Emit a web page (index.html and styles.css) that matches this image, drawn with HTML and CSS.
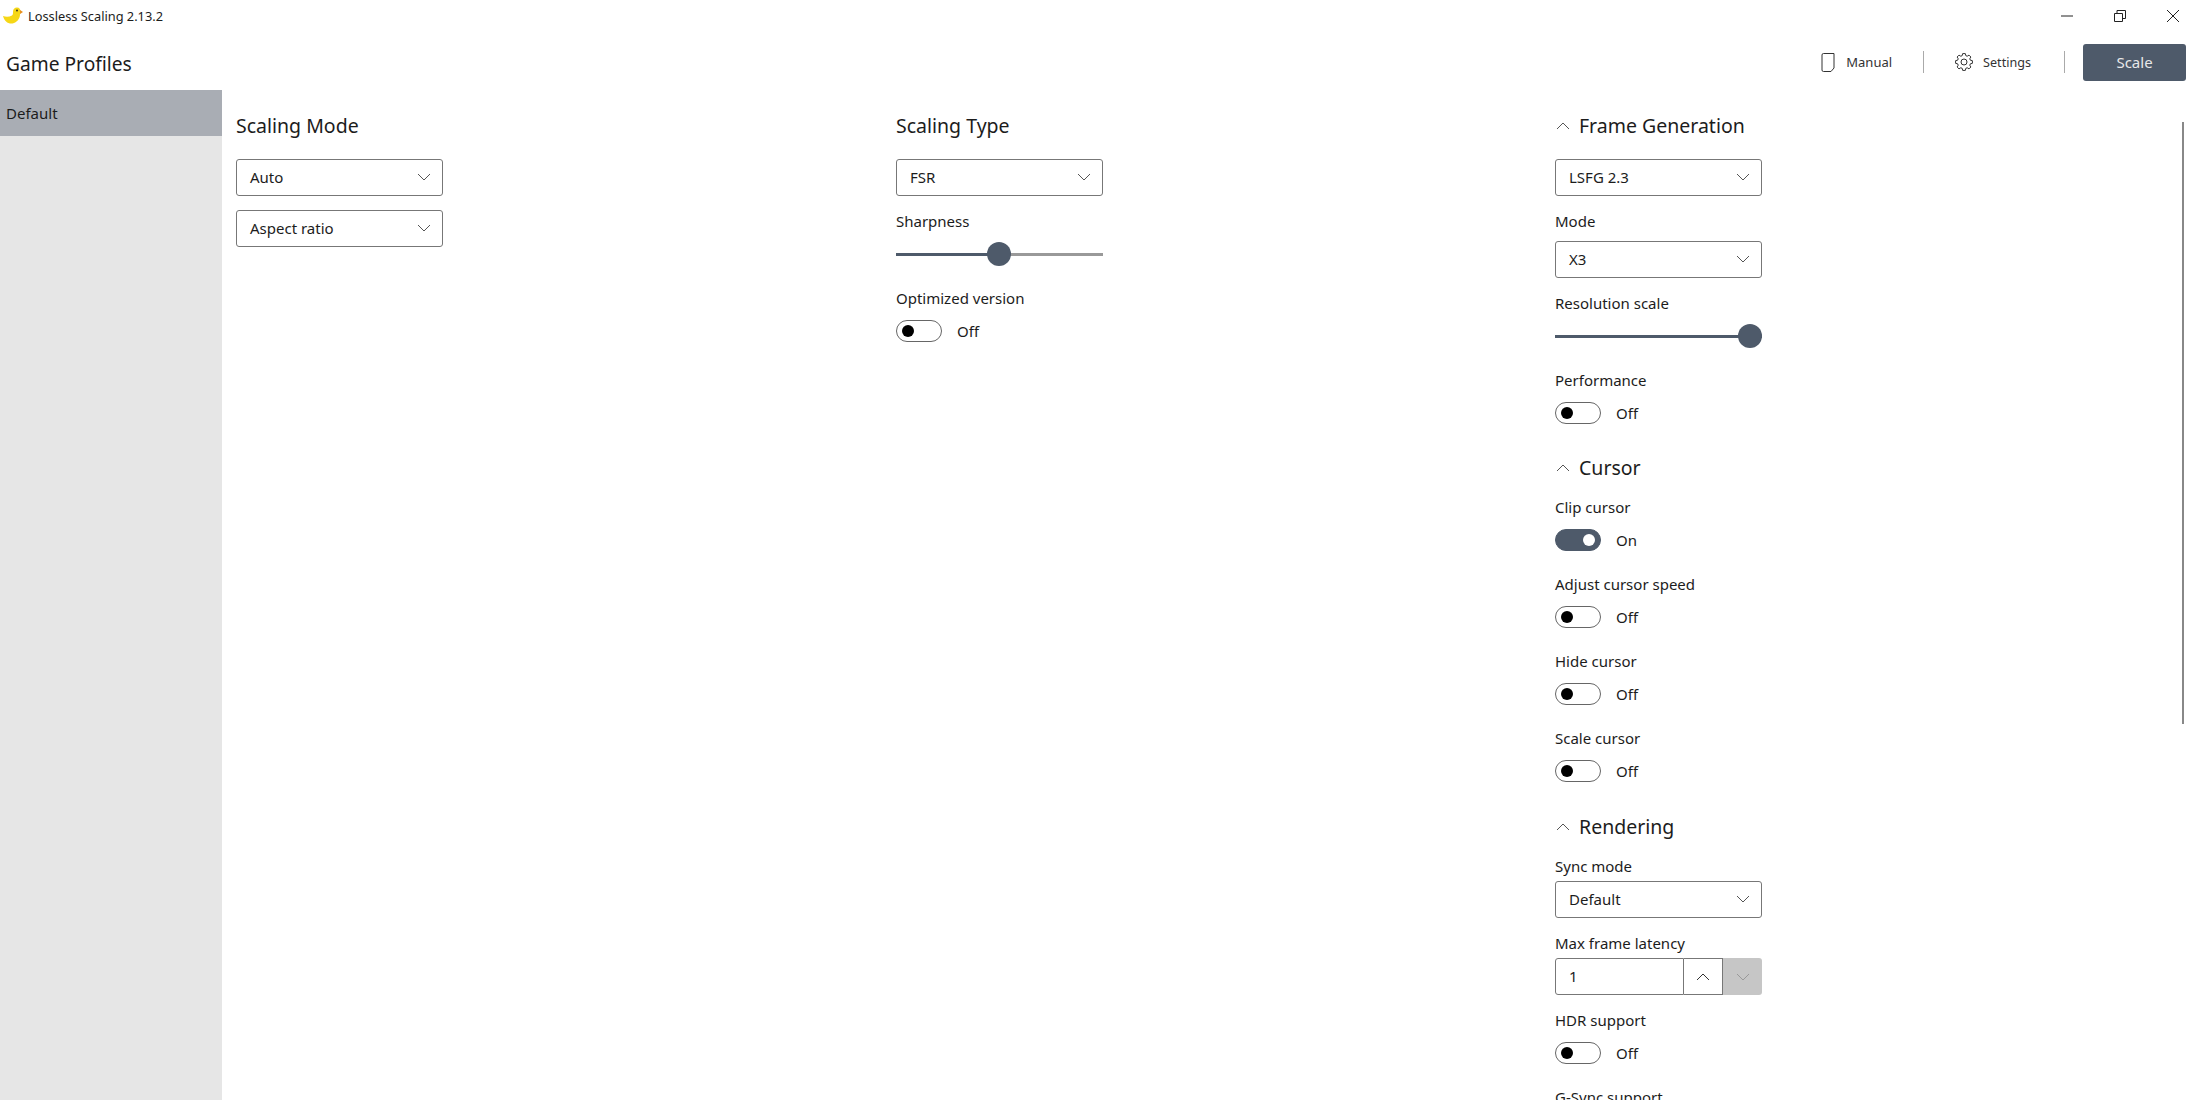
FILE: index.html
```html
<!DOCTYPE HTML>
<html>
<head>
  <meta http-equiv="content-type" content="text/html; charset=utf-8">
  <title>Lossless Scaling 2.13.2</title>
  <link rel="stylesheet" href="styles.css">
</head>
<body>
  <div id="titlebar">
    <svg class="duck" width="20" height="18" viewBox="0 0 20 18">
      <path d="M0 9c3 1 6 1 9-.5 1-1 1-2 1-3.500 0-3 1.500-4.500 4-4.500s3.500 2 3.500 4l-.5 3c0 4-3 8-7.500 9-5 .5-8-2.500-9.500-7.500z" fill="#f6d716"/>
      <path d="M17 3l3 2-3 2z" fill="#e8901c"/>
      <circle cx="14" cy="3.500" r="0.900" fill="#222"/>
    </svg>
    <span class="apptitle">Lossless Scaling 2.13.2</span>
    <div class="winbtns">
      <svg width="14" height="14" viewBox="0 0 14 14"><path d="M1 7h12" stroke="#222" fill="none"/></svg>
      <svg width="14" height="14" viewBox="0 0 14 14"><path d="M1.500 4.500h8v8h-8zM4 4.500v-3h8.500v8h-3" stroke="#222" fill="none"/></svg>
      <svg width="14" height="14" viewBox="0 0 14 14"><path d="M1 1l12 12M13 1L1 13" stroke="#222" fill="none"/></svg>
    </div>
  </div>

  <div id="header">
    <h1>Game Profiles</h1>
    <div class="actions">
      <div class="action">
        <svg width="14" height="19" viewBox="0 0 14 19"><path d="M2.500 .5H13V15L10 18.500H2.500a1.500 1.500 0 0 1-1.500-1.500V2a1.500 1.500 0 0 1 1.500-1.500z" stroke="#333" fill="none"/></svg>
        <span>Manual</span>
      </div>
      <div class="sep"></div>
      <div class="action">
        <svg width="18" height="18" viewBox="0 0 18 18"><path d="M15.340 7.180L17.400 7.670V10.330L15.340 10.820L14.770 12.200L15.880 14L14 15.880L12.200 14.770L10.820 15.340L10.330 17.400H7.670L7.180 15.340L5.800 14.770L4 15.880L2.120 14L3.230 12.200L2.660 10.820L.6 10.330V7.670L2.660 7.180L3.230 5.800L2.120 4L4 2.120L5.800 3.230L7.180 2.660L7.670 .6H10.330L10.820 2.660L12.200 3.230L14 2.120L15.880 4L14.770 5.800z" stroke="#333" fill="none" stroke-linejoin="round"/><circle cx="9" cy="9" r="3" stroke="#333" fill="none"/></svg>
        <span class="settings">Settings</span>
      </div>
      <div class="sep last"></div>
      <div class="scale-btn">Scale</div>
    </div>
  </div>

  <div id="main">
    <div id="sidebar">
      <div class="profile">Default</div>
    </div>
    <div id="content">
      <div class="col">
        <h2>Scaling Mode</h2>
        <div class="select"><span>Auto</span><svg class="chev" viewBox="0 0 14 8"><path d="M1 1l6 6 6-6"/></svg></div>
        <div class="select gap-s"><span>Aspect ratio</span><svg class="chev" viewBox="0 0 14 8"><path d="M1 1l6 6 6-6"/></svg></div>
      </div>

      <div class="col">
        <h2>Scaling Type</h2>
        <div class="select"><span>FSR</span><svg class="chev" viewBox="0 0 14 8"><path d="M1 1l6 6 6-6"/></svg></div>
        <div class="label">Sharpness</div>
        <div class="slider half"><div class="thumb"></div></div>
        <div class="label">Optimized version</div>
        <div class="toggle"><div class="switch"><i></i></div><span>Off</span></div>
      </div>

      <div class="col">
        <h2 class="group"><svg class="up" viewBox="0 0 14 8"><path d="M1 7l6-6 6 6"/></svg>Frame Generation</h2>
        <div class="select"><span>LSFG 2.3</span><svg class="chev" viewBox="0 0 14 8"><path d="M1 1l6 6 6-6"/></svg></div>
        <div class="label">Mode</div>
        <div class="select"><span>X3</span><svg class="chev" viewBox="0 0 14 8"><path d="M1 1l6 6 6-6"/></svg></div>
        <div class="label">Resolution scale</div>
        <div class="slider full"><div class="thumb"></div></div>
        <div class="label">Performance</div>
        <div class="toggle"><div class="switch"><i></i></div><span>Off</span></div>

        <h2 class="group next"><svg class="up" viewBox="0 0 14 8"><path d="M1 7l6-6 6 6"/></svg>Cursor</h2>
        <div class="label first">Clip cursor</div>
        <div class="toggle"><div class="switch on"><i></i></div><span>On</span></div>
        <div class="label after-toggle">Adjust cursor speed</div>
        <div class="toggle"><div class="switch"><i></i></div><span>Off</span></div>
        <div class="label after-toggle">Hide cursor</div>
        <div class="toggle"><div class="switch"><i></i></div><span>Off</span></div>
        <div class="label after-toggle">Scale cursor</div>
        <div class="toggle"><div class="switch"><i></i></div><span>Off</span></div>

        <h2 class="group next wide"><svg class="up" viewBox="0 0 14 8"><path d="M1 7l6-6 6 6"/></svg>Rendering</h2>
        <div class="label first">Sync mode</div>
        <div class="select tight"><span>Default</span><svg class="chev" viewBox="0 0 14 8"><path d="M1 1l6 6 6-6"/></svg></div>
        <div class="label">Max frame latency</div>
        <div class="spinner tight">
          <div class="value">1</div>
          <div class="spin-up"><svg class="up dark" viewBox="0 0 14 8"><path d="M1 7l6-6 6 6"/></svg></div>
          <div class="spin-down"><svg class="chev" viewBox="0 0 14 8"><path d="M1 1l6 6 6-6"/></svg></div>
        </div>
        <div class="label">HDR support</div>
        <div class="toggle"><div class="switch"><i></i></div><span>Off</span></div>
        <div class="label after-toggle">G-Sync support</div>
      </div>
    </div>
    <div class="scrollbar"></div>
  </div>
</body>
</html>
```

FILE: styles.css
```css
html, body {
  margin: 0;
  padding: 0;
  width: 100%;
  height: 100%;
  overflow: hidden;
  background-color: #fff;
  color: #1c1c1c;
  font-family: "Noto Sans", "Open Sans", sans-serif;
  font-size: 15px;
}
body {
  display: flex;
  flex-direction: column;
}
svg {
  display: block;
  flex: none;
}

#titlebar {
  height: 32px;
  flex: none;
  display: flex;
  align-items: center;
}
.duck {
  margin-left: 3px;
}
.apptitle {
  margin-left: 5px;
  font-size: 12.8px;
}
.winbtns {
  margin-left: auto;
  margin-right: 20px;
  display: flex;
  gap: 39px;
}

#header {
  height: 58px;
  flex: none;
  display: flex;
  align-items: center;
  justify-content: space-between;
}
h1 {
  margin: 4px 0 0 6px;
  font-size: 19.2px;
  font-weight: normal;
}
.actions {
  display: flex;
  align-items: center;
  margin-right: 14px;
  margin-top: 2px;
  font-size: 13px;
}
.action {
  display: flex;
  align-items: center;
  gap: 11px;
  color: #333;
}
.settings {
  font-size: 12.6px;
  margin-left: -1px;
}
.sep {
  width: 1px;
  height: 22px;
  background-color: #aaa;
  margin: 0 31px;
}
.sep.last {
  margin: 0 18px 0 33px;
}
.scale-btn {
  width: 103px;
  height: 37px;
  display: flex;
  align-items: center;
  justify-content: center;
  border-radius: 3px;
  background-color: #4e5a6a;
  color: #e8e8e8;
  font-size: 15px;
}

#main {
  flex: 1;
  display: flex;
  position: relative;
  min-height: 0;
}
#sidebar {
  width: 222px;
  flex: none;
  background-color: #e6e6e6;
}
.profile {
  height: 46px;
  line-height: 46px;
  padding-left: 6px;
  background-color: #a9adb4;
}
#content {
  flex: 1;
  display: grid;
  grid-template-columns: 660px 659px 1fr;
  padding-left: 14px;
  overflow: hidden;
}
.col {
  width: 207px;
}

h2 {
  margin: 0;
  padding: 21px 0 18px;
  line-height: 30px;
  font-size: 19.5px;
  font-weight: normal;
  display: flex;
  align-items: center;
}
h2.group.next {
  padding: 29px 0 0;
}
h2.group.wide {
  padding-top: 30px;
}
.up {
  width: 14px;
  height: 8px;
  margin: 0 9px 0 1px;
}
.up path, .chev path {
  fill: none;
  stroke: #555;
  stroke-width: 1;
}
.up.dark {
  margin: 0;
}
.up.dark path {
  stroke: #333;
}

.select {
  box-sizing: border-box;
  height: 37px;
  display: flex;
  align-items: center;
  justify-content: space-between;
  padding: 0 11px 1px 13px;
  border: 1px solid #777;
  border-radius: 3px;
  background-color: #fff;
}
.gap-s {
  margin-top: 14px;
}
.chev {
  width: 14px;
  height: 8px;
}

.label {
  height: 20px;
  line-height: 20px;
  margin-top: 15px;
  margin-bottom: 10px;
}
.label.first {
  margin-top: 14px;
}
.label.after-toggle {
  margin-top: 23px;
}
.tight {
  margin-top: -5px;
}

.slider {
  height: 3px;
  position: relative;
  margin: 22px 0 32px;
  background-color: #999;
}
.slider.half {
  background: linear-gradient(to right, #4e5a6a 50%, #999 50%);
}
.slider.full {
  background-color: #4e5a6a;
}
.thumb {
  position: absolute;
  top: -11px;
  width: 24px;
  height: 24px;
  border-radius: 50%;
  background-color: #4e5a6a;
}
.half .thumb {
  left: 91px;
}
.full .thumb {
  right: 0;
}

.toggle {
  height: 22px;
  margin-top: 12px;
  display: flex;
  align-items: center;
  gap: 15px;
}
.switch {
  box-sizing: border-box;
  width: 46px;
  height: 22px;
  display: flex;
  align-items: center;
  padding: 0 5px;
  border: 1px solid #666;
  border-radius: 11px;
}
.switch i {
  width: 12px;
  height: 12px;
  border-radius: 50%;
  background-color: #000;
}
.switch.on {
  justify-content: flex-end;
  background-color: #4e5a6a;
  border-color: #4e5a6a;
}
.switch.on i {
  background-color: #fff;
}

.spinner {
  height: 37px;
  display: flex;
}
.value {
  flex: 1;
  box-sizing: border-box;
  padding-left: 13px;
  line-height: 34px;
  border: 1px solid #777;
  border-radius: 3px 0 0 3px;
}
.spin-up, .spin-down {
  width: 39px;
  display: flex;
  align-items: center;
  justify-content: center;
  box-sizing: border-box;
}
.spin-up {
  border: 1px solid #777;
  border-left: 0;
}
.spin-down {
  background-color: #c6c6c6;
  border-radius: 0 3px 3px 0;
}
.spin-down .chev path {
  stroke: #999;
}

.scrollbar {
  position: absolute;
  top: 32px;
  right: 16px;
  width: 2px;
  height: 602px;
  background-color: #888;
}
```
